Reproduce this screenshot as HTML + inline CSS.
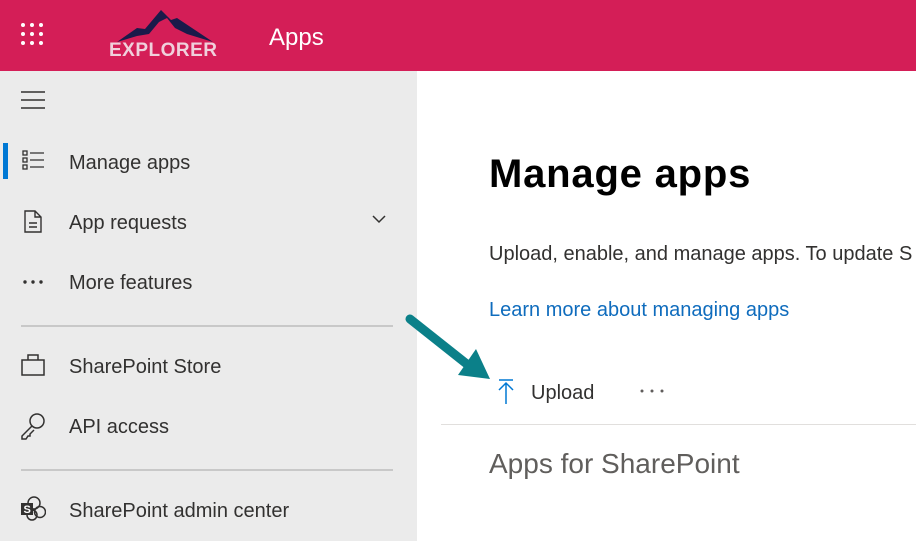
<!DOCTYPE html>
<html><head><style>
*{margin:0;padding:0;box-sizing:border-box}
body{width:916px;height:541px;overflow:hidden;font-family:"Liberation Sans",sans-serif;background:#fff;position:relative;color:#323130}
.top{position:absolute;left:0;top:0;width:916px;height:71px;background:#d41e57}
.side{position:absolute;left:0;top:71px;width:417px;height:470px;background:#ebebeb}
.t{position:absolute;font-size:20px;color:#323130;white-space:nowrap}
.hr{position:absolute;left:21px;width:372px;height:2px;background:#c8c8c8}
svg{position:absolute}
</style></head><body>
<div class="top"></div>
<svg style="left:20px;top:22px" width="26" height="26"><g fill="#fff"><circle cx="3" cy="3" r="2"/><circle cx="12" cy="3" r="2"/><circle cx="21" cy="3" r="2"/><circle cx="3" cy="12" r="2"/><circle cx="12" cy="12" r="2"/><circle cx="21" cy="12" r="2"/><circle cx="3" cy="21" r="2"/><circle cx="21" cy="21" r="2"/><circle cx="12" cy="21" r="2"/></g></svg>
<svg style="left:115px;top:8px" width="100" height="36"><path d="M2 34 L22 20 L30 21 L46 2 L56 12 L62 10 L98 34 L72 26 L60 20 L52 10 L44 14 L34 26 L22 28Z" fill="#1a1a4a"/></svg>
<div class="t" style="left:109px;top:40px;font-size:19px;font-weight:bold;color:#f0d0dc;letter-spacing:0.5px">EXPLORER</div>
<div class="t" style="left:269px;top:24px;font-size:24px;color:#fff">Apps</div>
<div class="side"></div>
<svg style="left:21px;top:91px" width="24" height="18"><path d="M0 1H24M0 9H24M0 17H24" stroke="#323130" stroke-width="1.5"/></svg>
<div style="position:absolute;left:3px;top:143px;width:5px;height:36px;background:#0078d4"></div>
<svg style="left:22px;top:150px" width="24" height="22" fill="none" stroke="#323130" stroke-width="1.3"><rect x="1" y="1" width="4" height="4"/><rect x="1" y="8" width="4" height="4"/><rect x="1" y="15" width="4" height="4"/><path d="M8 3H22M8 10H22M8 17H22"/></svg>
<div class="t" style="left:69px;top:152px">Manage apps</div>
<svg style="left:23px;top:209px" width="20" height="26" fill="none" stroke="#323130" stroke-width="1.4"><path d="M2 2H12L18 8V23H2Z M12 2V8H18 M6 14H14M6 18H14"/></svg>
<div class="t" style="left:69px;top:212px">App requests</div>
<svg style="left:372px;top:214px" width="14" height="10"><path d="M1 2L7 8L13 2" fill="none" stroke="#323130" stroke-width="1.5"/></svg>
<svg style="left:22px;top:278px" width="22" height="8" fill="#323130"><circle cx="3" cy="4" r="1.7"/><circle cx="11" cy="4" r="1.7"/><circle cx="19" cy="4" r="1.7"/></svg>
<div class="t" style="left:69px;top:272px">More features</div>
<div class="hr" style="top:325px"></div>
<svg style="left:20px;top:352px" width="26" height="26" fill="none" stroke="#323130" stroke-width="1.5"><rect x="2" y="8" width="22" height="15"/><path d="M8 8V3H18V8"/></svg>
<div class="t" style="left:69px;top:356px">SharePoint Store</div>
<svg style="left:20px;top:412px" width="26" height="28" fill="none" stroke="#323130" stroke-width="1.5"><circle cx="17" cy="9" r="7"/><path d="M12 14L2 24V27H6L8 24H10V22L14 18"/></svg>
<div class="t" style="left:69px;top:416px">API access</div>
<div class="hr" style="top:469px"></div>
<svg style="left:20px;top:495px" width="26" height="28"><circle cx="14" cy="8" r="6" fill="none" stroke="#323130" stroke-width="1.5"/><circle cx="20" cy="17" r="5.5" fill="none" stroke="#323130" stroke-width="1.5"/><circle cx="12" cy="20" r="5" fill="none" stroke="#323130" stroke-width="1.5"/><rect x="1" y="8" width="12" height="12" fill="#323130"/><text x="3.5" y="18" font-size="11" font-weight="bold" fill="#fff" font-family="Liberation Sans">S</text></svg>
<div class="t" style="left:69px;top:500px">SharePoint admin center</div>
<div class="t" style="left:489px;top:152px;font-size:40px;font-weight:bold;color:#000;letter-spacing:0.8px">Manage apps</div>
<div class="t" style="left:489px;top:243px;font-size:20px">Upload, enable, and manage apps. To update S</div>
<div class="t" style="left:489px;top:299px;font-size:20px;color:#0f6cbd">Learn more about managing apps</div>
<svg style="left:404px;top:313px" width="90" height="70"><path d="M6 6L64 52" stroke="#0b8089" stroke-width="9" stroke-linecap="round"/><path d="M54 62L86 66L72 36Z" fill="#0b8089"/></svg>
<svg style="left:497px;top:379px" width="18" height="26"><path d="M2 1H16M9 4V25M2 11L9 4L16 11" fill="none" stroke="#0078d4" stroke-width="1.5"/></svg>
<div class="t" style="left:531px;top:382px;font-size:20px">Upload</div>
<svg style="left:640px;top:388px" width="26" height="6" fill="#605e5c"><circle cx="2" cy="3" r="1.5"/><circle cx="12" cy="3" r="1.5"/><circle cx="22" cy="3" r="1.5"/></svg>
<div style="position:absolute;left:441px;top:424px;width:475px;height:1px;background:#e1dfdd"></div>
<div class="t" style="left:489px;top:448px;font-size:28px;color:#605e5c">Apps for SharePoint</div>
</body></html>
